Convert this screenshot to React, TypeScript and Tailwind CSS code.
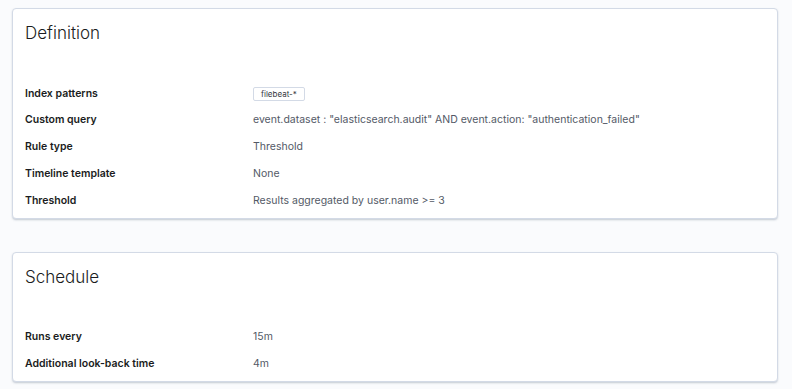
import React from "react";

interface Row {
  label: string;
  value: React.ReactNode;
}

const definitionRows: Row[] = [
  {
    label: "Index patterns",
    value: (
      <span className="inline-flex h-[14px] items-center rounded-[2px] border border-[#d3dae6] bg-white px-[7px] text-[8px] leading-none text-[#343741]">
        filebeat-*
      </span>
    ),
  },
  {
    label: "Custom query",
    value: 'event.dataset : "elasticsearch.audit" AND event.action: "authentication_failed"',
  },
  { label: "Rule type", value: "Threshold" },
  { label: "Timeline template", value: "None" },
  { label: "Threshold", value: "Results aggregated by user.name >= 3" },
];

const scheduleRows: Row[] = [
  { label: "Runs every", value: "15m" },
  { label: "Additional look-back time", value: "4m" },
];

function Panel({ title, rows }: { title: string; rows: Row[] }) {
  return (
    <section className="w-[766px] rounded-[4px] border border-[#d3dae6] bg-white px-3 pb-[4px] pt-[10px] shadow-[0_1px_2px_rgba(152,162,179,0.35),0_2px_2px_-1px_rgba(152,162,179,0.3)]">
      <h2 className="h-7 text-[17px] font-light leading-7 text-[#1a1c21]">{title}</h2>
      <dl className="mt-[33px]">
        {rows.map((row) => (
          <div key={row.label} className="flex h-[26.75px] items-center text-[10.5px]">
            <dt className="w-[228px] shrink-0 font-semibold text-[#1a1c21]">{row.label}</dt>
            <dd className="text-[#535966]">{row.value}</dd>
          </div>
        ))}
      </dl>
    </section>
  );
}

export default function App() {
  return (
    <div
      className="min-h-[389px] bg-[#fafbfd] px-3 pt-2"
      style={{ fontFamily: "Inter, 'Noto Sans', sans-serif" }}
    >
      <Panel title="Definition" rows={definitionRows} />
      <div className="mt-[33px]">
        <Panel title="Schedule" rows={scheduleRows} />
      </div>
    </div>
  );
}
